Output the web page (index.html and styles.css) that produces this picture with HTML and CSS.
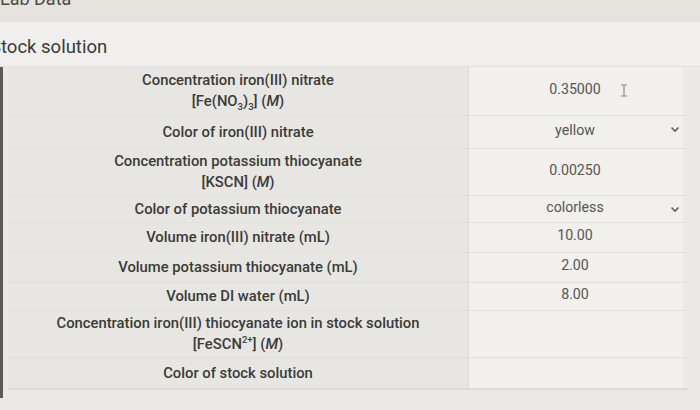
FILE: index.html
```html
<!DOCTYPE html>
<html>
<head>
<meta charset="utf-8">
<link rel="stylesheet" href="styles.css">
</head>
<body>
<div class="page">
  <div class="title">Lab Data</div>
  <div class="section">Stock solution</div>
  <div class="table">
    <div class="lbl h49"><span>Concentration iron(III) nitrate<br>[Fe(NO<sub>3</sub>)<sub>3</sub>] (<i>M</i>)</span></div>
    <div class="val h49"><span class="v">0.35000</span>
      <svg class="ibeam" width="8" height="13" viewBox="0 0 8 13"><path d="M1 1h6M4 1v11M1 12h6" stroke="#8a8a88" stroke-width="1.2" fill="none"/></svg>
    </div>
    <div class="lbl h33"><span>Color of iron(III) nitrate</span></div>
    <div class="val h33 sel"><span class="v">yellow</span>
      <svg class="chev" width="10" height="7" viewBox="0 0 10 7"><path d="M1.5 1.5l3.5 3.5 3.5-3.5" stroke="#5e5e5c" stroke-width="1.6" fill="none"/></svg>
    </div>
    <div class="lbl h47"><span>Concentration potassium thiocyanate<br>[KSCN] (<i>M</i>)</span></div>
    <div class="val h47"><span class="v">0.00250</span></div>
    <div class="lbl h27"><span>Color of potassium thiocyanate</span></div>
    <div class="val h27 sel"><span class="v">colorless</span>
      <svg class="chev" width="10" height="7" viewBox="0 0 10 7"><path d="M1.5 1.5l3.5 3.5 3.5-3.5" stroke="#5e5e5c" stroke-width="1.6" fill="none"/></svg>
    </div>
    <div class="lbl h30"><span>Volume iron(III) nitrate (mL)</span></div>
    <div class="val h30"><span class="v">10.00</span></div>
    <div class="lbl h30"><span>Volume potassium thiocyanate (mL)</span></div>
    <div class="val h30"><span class="v">2.00</span></div>
    <div class="lbl h28"><span>Volume DI water (mL)</span></div>
    <div class="val h28"><span class="v">8.00</span></div>
    <div class="lbl h47"><span>Concentration iron(III) thiocyanate ion in stock solution<br>[FeSCN<sup>2+</sup>] (<i>M</i>)</span></div>
    <div class="val h47"><span class="v"></span></div>
    <div class="lbl h31"><span>Color of stock solution</span></div>
    <div class="val h31"><span class="v"></span></div>
  </div>
</div>
</body>
</html>
```
FILE: styles.css
```css
html, body {
  margin: 0;
  padding: 0;
}
body {
  background: #ebe9e5;
  font-family: Roboto, "Liberation Sans", sans-serif;
  width: 700px;
  height: 410px;
  overflow: hidden;
}
.page {
  border-left: 3px solid #5b5a57;
  height: 410px;
  box-sizing: border-box;
}
.title {
  height: 22px;
  margin-top: -12px;
  font-size: 18px;
  line-height: 22px;
  color: #4a4a48;
  margin-left: -3px;
  background: #e6e3df;
  padding-bottom: 12px;
  box-sizing: content-box;
}
.section {
  height: 44px;
  line-height: 50px;
  font-size: 18.5px;
  color: #3a3a38;
  margin-left: -13px;
  background: #f0efed;
  border-bottom: 1px solid #e2e0dc;
}
.table {
  display: grid;
  grid-template-columns: 460px 222px;
  margin-left: 5px;
  width: 682px;
  background: #e9e7e3;
  border-bottom: 1px solid #dcdad6;
}
.lbl {
  display: flex;
  align-items: center;
  justify-content: center;
  text-align: center;
  font-weight: 500;
  font-size: 14.8px;
  line-height: 21px;
  color: #3b3b39;
  border-bottom: 1px solid #e0ded9;
  box-sizing: border-box;
  background: #e8e6e2;
}
.lbl sub, .lbl sup {
  font-size: 9.5px;
  line-height: 0;
}
.lbl i {
  font-style: italic;
}
.val {
  position: relative;
  display: flex;
  align-items: center;
  justify-content: center;
  box-sizing: border-box;
  background: #f1f0ed;
  border-left: 1px solid #dddbd6;
  border-right: 7px solid #eceae6;
  border-bottom: 1px solid #dfddd8;
  padding-bottom: 5px;
  padding-right: 2px;
  font-size: 14.2px;
  color: #555553;
}
.v {
  display: block;
}
.ibeam {
  position: absolute;
  left: 151px;
  top: 17px;
}
.chev {
  position: absolute;
  right: 3px;
  top: 10px;
}
.h49 { height: 49px; }
.h33 { height: 33px; }
.h47 { height: 47px; }
.h27 { height: 27px; }
.h30 { height: 30px; }
.h28 { height: 28px; }
.h31 { height: 31px; }
```
